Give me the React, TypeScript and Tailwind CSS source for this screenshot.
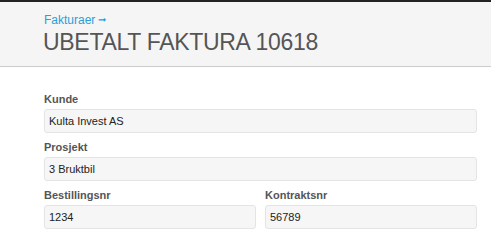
export default function App() {
  return (
    <div className="min-h-screen bg-white font-['Liberation_Sans',Arial,sans-serif]">
      <div className="h-[2px] bg-[#222]" />
      <div className="bg-[#f5f5f5] border-b border-[#cccccc] px-[43px] pt-[11px] pb-[11px]">
        <a className="flex items-center gap-[3px] text-[12px] leading-[14px] text-[#2a9fd6] pl-[1px]">
          Fakturaer
          <span className="text-[10px]">➞</span>
        </a>
        <h1 className="text-[23px] leading-[26px] tracking-[-0.3px] mt-[2px] text-[#555]">UBETALT FAKTURA 10618</h1>
      </div>

      <div className="pl-[44px] pr-[14px] pt-[26px] space-y-[8px]">
        <Field label="Kunde" value="Kulta Invest AS" />
        <Field label="Prosjekt" value="3 Bruktbil" />
        <div className="grid grid-cols-2 gap-[9px]">
          <Field label="Bestillingsnr" value="1234" />
          <Field label="Kontraktsnr" value="56789" />
        </div>
      </div>
    </div>
  );
}

function Field({ label, value }: { label: string; value: string }) {
  return (
    <div>
      <label className="block text-[11px] font-bold text-[#555] leading-[13px] mb-[3px]">{label}</label>
      <div className="h-[24px] rounded-[3px] border border-[#e4e4e4] bg-[#f6f6f6] px-[4px] flex items-center text-[11px] text-[#222]">
        {value}
      </div>
    </div>
  );
}
